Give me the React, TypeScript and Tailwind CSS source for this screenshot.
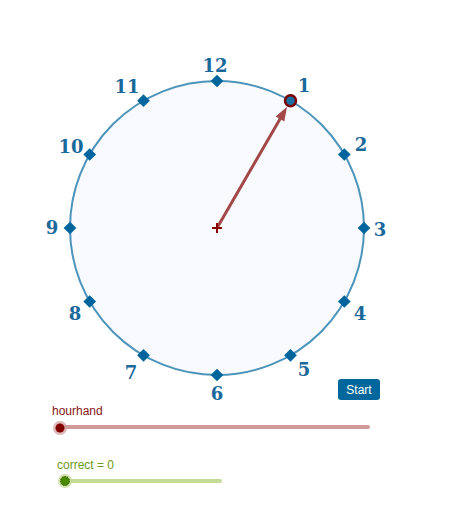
import React from 'react';

const CX = 217;
const CY = 228;
const R = 147;

const labels: { n: number; x: number; y: number }[] = [
    { n: 12, x: 215, y: 72 },
    { n: 1, x: 304, y: 92 },
    { n: 2, x: 361, y: 151 },
    { n: 3, x: 380, y: 236 },
    { n: 4, x: 360, y: 320 },
    { n: 5, x: 304, y: 376 },
    { n: 6, x: 217, y: 400 },
    { n: 7, x: 131, y: 379 },
    { n: 8, x: 75, y: 320 },
    { n: 9, x: 52, y: 234 },
    { n: 10, x: 71, y: 153 },
    { n: 11, x: 127, y: 93 },
];

const Clock: React.FC = () => {
    const ticks = Array.from({ length: 12 }, (_, i) => {
        const a = (i * Math.PI) / 6;
        return { x: CX + R * Math.sin(a), y: CY - R * Math.cos(a) };
    });
    const tip = ticks[1];
    // arrow head along the hand
    const dx = tip.x - CX;
    const dy = tip.y - CY;
    const len = Math.hypot(dx, dy);
    const ux = dx / len;
    const uy = dy / len;
    const end = { x: tip.x - ux * 7, y: tip.y - uy * 7 };
    const base = { x: end.x - ux * 14, y: end.y - uy * 14 };
    const px = -uy;
    const py = ux;

    return (
        <svg width="449" height="512" className="absolute inset-0">
            <circle cx={CX} cy={CY} r={R} fill="#f8fafd" stroke="#4d94bb" strokeWidth="2" />
            {ticks.map((t, i) => (
                <rect
                    key={i}
                    x={t.x - 4.5}
                    y={t.y - 4.5}
                    width="9"
                    height="9"
                    fill="#00659c"
                    transform={`rotate(45 ${t.x} ${t.y})`}
                />
            ))}
            <line x1={CX} y1={CY} x2={base.x} y2={base.y} stroke="#a24848" strokeWidth="3" strokeLinecap="round" />
            <polygon
                points={`${end.x},${end.y} ${base.x + px * 5},${base.y + py * 5} ${base.x - px * 5},${base.y - py * 5}`}
                fill="#a24848"
            />
            <circle cx={tip.x} cy={tip.y} r="5.5" fill="#1a6fa0" stroke="#7a0000" strokeWidth="2.5" />
            <line x1={CX - 5} y1={CY} x2={CX + 5} y2={CY} stroke="#8b0000" strokeWidth="2" />
            <line x1={CX} y1={CY - 5} x2={CX} y2={CY + 5} stroke="#8b0000" strokeWidth="2" />
            {labels.map((l) => (
                <text
                    key={l.n}
                    x={l.x}
                    y={l.y}
                    textAnchor="middle"
                    fill="#1a699b"
                    fontSize="18"
                    fontWeight="bold"
                    fontFamily='"DejaVu Serif", serif'
                >
                    {l.n}
                </text>
            ))}

            {/* hourhand slider */}
            <text x="52" y="415" fill="#861515" fontSize="12" fontFamily='"Liberation Sans", Arial, sans-serif'>
                hourhand
            </text>
            <line x1="60" y1="427" x2="368" y2="427" stroke="#d09a9a" strokeWidth="4" strokeLinecap="round" />
            <circle cx="60" cy="428" r="7" fill="#d09a9a" opacity="0.7" />
            <circle cx="60" cy="428" r="4.5" fill="#800000" />

            {/* correct slider */}
            <text x="57" y="469" fill="#6a9a1c" fontSize="12" fontFamily='"Liberation Sans", Arial, sans-serif'>
                correct = 0
            </text>
            <line x1="65" y1="481" x2="220" y2="481" stroke="#c3db95" strokeWidth="4" strokeLinecap="round" />
            <circle cx="65" cy="481" r="7" fill="#c3db95" opacity="0.8" />
            <circle cx="65" cy="481" r="4.5" fill="#4a8a00" stroke="#1f3a00" strokeWidth="0.8" strokeDasharray="1.5 1" />
        </svg>
    );
};

const App: React.FC = () => {
    return (
        <div className="relative w-[449px] h-[512px] bg-white overflow-hidden">
            <Clock />
            <button className="absolute left-[338px] top-[379px] w-[42px] h-[21px] rounded-[3px] bg-[#00679c] text-white text-[12px] leading-none font-['Liberation_Sans',Arial,sans-serif]">
                Start
            </button>
        </div>
    );
};

export default App;
